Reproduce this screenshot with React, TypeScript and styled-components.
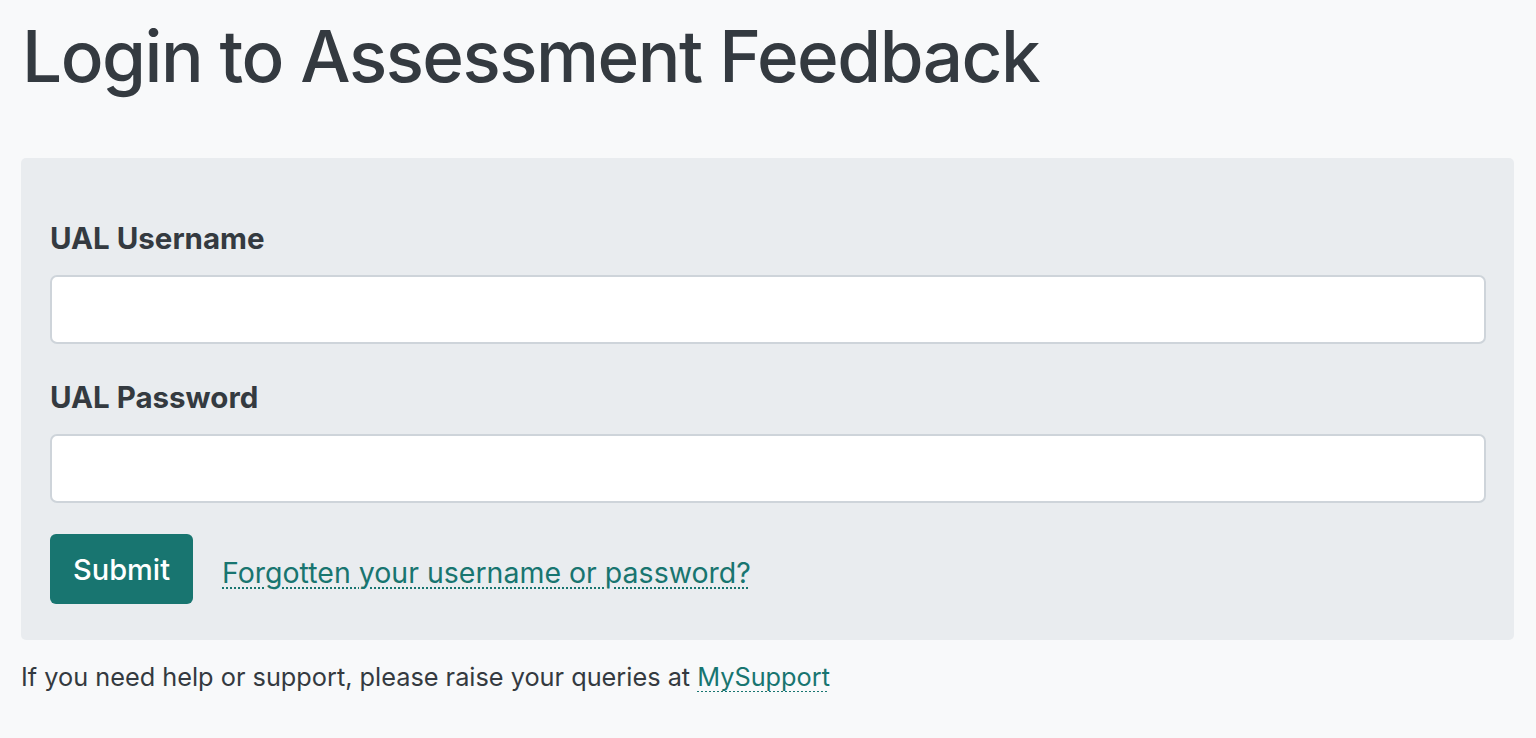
import styled, { createGlobalStyle } from "styled-components";

const GlobalStyle = createGlobalStyle`
  body {
    margin: 0;
    background: #f8f9fa;
    font-family: Inter, "Noto Sans", sans-serif;
    color: #343a40;
  }
`;

const App = () => {
  return (
    <Page>
      <GlobalStyle />
      <Title>Login to Assessment Feedback</Title>

      <Panel>
        <form onSubmit={(e) => e.preventDefault()}>
          <Field>
            <Label htmlFor="username">UAL Username</Label>
            <Input id="username" name="username" type="text" />
          </Field>

          <Field>
            <Label htmlFor="password">UAL Password</Label>
            <Input id="password" name="password" type="password" />
          </Field>

          <Actions>
            <SubmitButton type="submit">Submit</SubmitButton>
            <DottedLink href="#">Forgotten your username or password?</DottedLink>
          </Actions>
        </form>
      </Panel>

      <HelpText>
        If you need help or support, please raise your queries at{" "}
        <DottedLink href="#">MySupport</DottedLink>
      </HelpText>
    </Page>
  );
};

export default App;

const Page = styled.div`
  padding: 0 22px 0 21px;
`;

const Title = styled.h1`
  margin: 0;
  padding: 13px 0 0 1px;
  font-size: 71px;
  font-weight: 500;
  line-height: 86px;
  letter-spacing: -1.5px;
  color: #343a40;
`;

const Panel = styled.div`
  margin-top: 59px;
  padding: 62px 28px 36px 29px;
  background: #e9ecef;
  border-radius: 5px;
`;

const Field = styled.div`
  display: flex;
  flex-direction: column;
  margin-bottom: 35px;

  & + & {
    margin-bottom: 22px;
  }
`;

const Label = styled.label`
  font-size: 29.5px;
  font-weight: 700;
  line-height: 36px;
  margin-bottom: 19px;
`;

const Input = styled.input`
  height: 69px;
  box-sizing: border-box;
  border: 2px solid #ced4da;
  border-radius: 7px;
  background: #fff;
  font: inherit;
  font-size: 28px;
  padding: 0 18px;
`;

const Actions = styled.div`
  display: flex;
  align-items: center;
  gap: 29px;
  margin-top: 31px;
`;

const SubmitButton = styled.button`
  width: 143px;
  height: 70px;
  border: none;
  border-radius: 6px;
  background: #187570;
  color: #fff;
  font-family: inherit;
  font-size: 29px;
  font-weight: 500;
  cursor: pointer;
`;

const DottedLink = styled.a`
  color: #187570;
  font-size: inherit;
  text-decoration: underline dotted;
  text-underline-offset: 5px;
  text-decoration-thickness: 2px;

  ${Actions} & {
    font-size: 28.5px;
    margin-top: 6px;
  }
`;

const HelpText = styled.p`
  margin: 22px 0 0;
  font-size: 25.3px;
  line-height: 30px;
  color: #343a40;
`;
